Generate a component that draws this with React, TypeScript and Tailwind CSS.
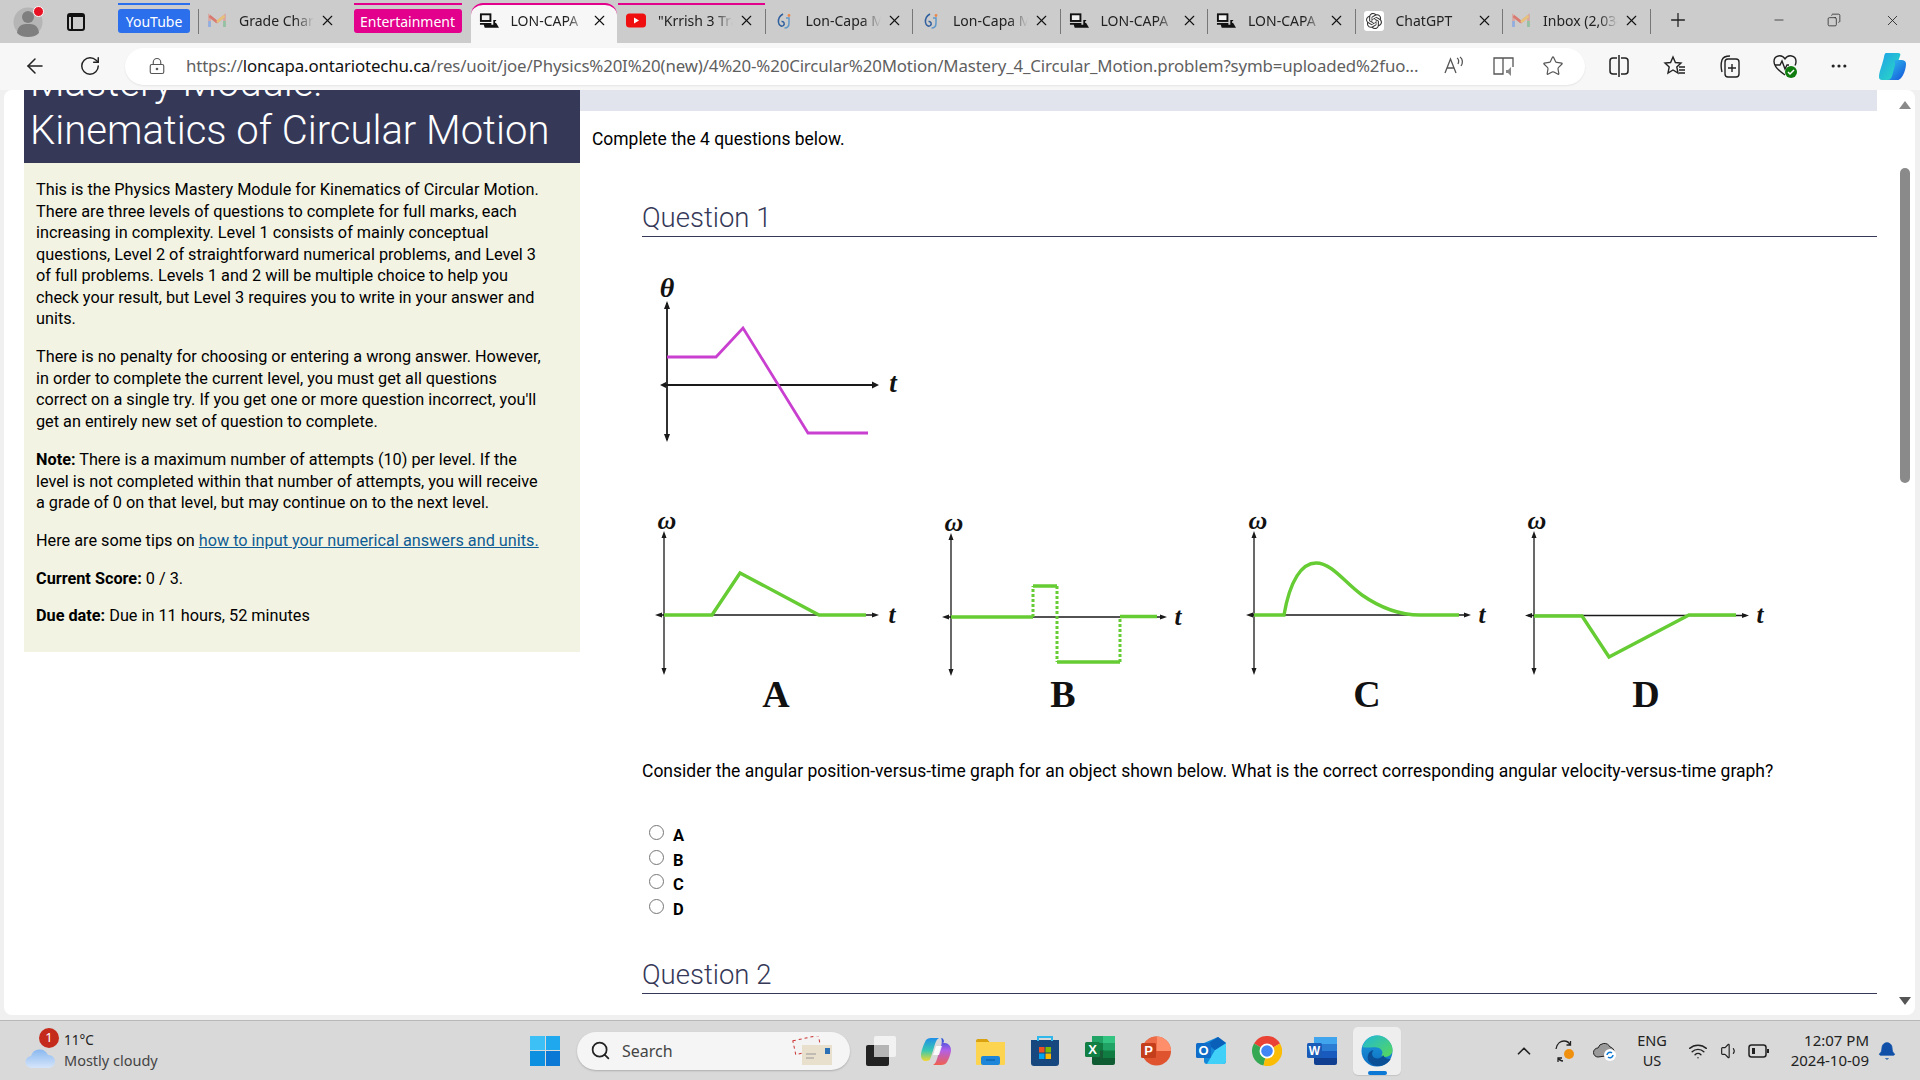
import React from "react";
import { ArrowLeft, RotateCw, LockKeyhole, Star, Search, Plus, Minus, X, Copy, Ellipsis, ChevronUp, Wifi, Volume1, Bell } from "lucide-react";
import { SiOpenai } from "react-icons/si";

const UI = { fontFamily: '"Noto Sans", sans-serif' };
const RB = { fontFamily: 'Roboto, sans-serif' };
const LS = { fontFamily: '"Liberation Sans", sans-serif' };

function Gmail() {
  return (
    <svg width="18" height="18" viewBox="0 0 18 18" fill="none">
      <path d="M1.5 15V4l7.5 6 7.5-6v11" stroke="#d9a59f" strokeWidth="2.6" fill="none" />
      <path d="M1.5 4l7.5 6" stroke="#d97a70" strokeWidth="2.6" />
      <path d="M16.5 4L9 10" stroke="#e6c27a" strokeWidth="2.6" />
      <path d="M16.5 9v6" stroke="#8fc4a4" strokeWidth="2.6" />
      <path d="M1.5 9v6" stroke="#8fb0e4" strokeWidth="2.6" />
    </svg>
  );
}
function Lon() {
  return (
    <svg width="21" height="17" viewBox="0 0 21 17">
      <path d="M1 1h12v9H1z" fill="#111" />
      <rect x="3" y="3" width="8" height="5" fill="#f2f2f2" />
      <path d="M1 11h12v2h2v-5h3v1h-1v2h1l3 5H6l-1-3H1z" fill="#111" />
    </svg>
  );
}
function Yt() {
  return (
    <svg width="20" height="15" viewBox="0 0 20 15">
      <rect width="20" height="14" y="0.5" rx="3.500" fill="#ef0f0f" />
      <path d="M8 4.500l5 3-5 3z" fill="#fff" />
    </svg>
  );
}
function Ont() {
  return (
    <svg width="18" height="18" viewBox="0 0 18 18" fill="none">
      <path d="M8 2C4.500 4 3 7 3.500 10.500c.5 3 3 4.500 5 3 1.500-1.500.5-4.500-2-4" stroke="#2f5f9e" strokeWidth="1.500" />
      <path d="M11 6h3v5c0 3.500-2 5-4.500 5" stroke="#5f96c8" strokeWidth="1.500" />
      <circle cx="14" cy="3.500" r="1.400" fill="#e8884a" />
    </svg>
  );
}
function Gpt() {
  return (
    <span className="w-[20px] h-[20px] bg-white rounded-[3px] flex items-center justify-center">
      <SiOpenai size={16} color="#333" />
    </span>
  );
}

function Tab({ icon, label, active, line }: { icon: React.ReactNode; label: string; active?: boolean; line?: boolean }) {
  return (
    <div className={"flex items-center h-[40px] w-[146.500px] shrink-0 pl-[8px] pb-[7px] " + (active ? "bg-[#f7f7f7] rounded-t-[12px] " : "") + (line ? "border-t-2 border-[#e3008c]" : "border-t-2 border-transparent")}>
      <span className="w-[20px] flex justify-center shrink-0">{icon}</span>
      <span className="ml-[12px] w-[78px] overflow-hidden whitespace-nowrap text-[14px] text-[#222] [mask-image:linear-gradient(to_right,black_72%,transparent_96%)]" style={UI}>{label}</span>
      <X size={17} strokeWidth={1.600} className="ml-[2px] text-[#111] shrink-0" />
    </div>
  );
}
const Sep = () => <div className="flex items-center h-[40px] shrink-0"><div className="w-px h-[25px] bg-[#777] -mt-[3px]" /></div>;

function TabBar() {
  return (
    <div className="h-[43px] bg-[#cccccc] flex items-end shrink-0">
      <div className="w-[118px] h-[43px] shrink-0 flex items-center relative">
        <svg width="32" height="30" viewBox="0 0 32 30" className="ml-[13px]">
          <circle cx="15" cy="15" r="14.500" fill="#b5b5b5" />
          <circle cx="15" cy="10" r="6" fill="#7f7f7f" />
          <path d="M4 26c1-8 5-9 11-9s10 1 11 9c-3 3-7 4-11 4S7 29 4 26z" fill="#7f7f7f" />
        </svg>
        <span className="absolute left-[33px] top-[6px] w-[11px] h-[11px] rounded-full bg-[#e81123] border border-white" />
        <span className="ml-[22px] w-[18px] h-[18px] rounded-[3px] border-2 border-[#111] border-t-[4px] flex">
          <span className="w-[4px] border-r-2 border-[#111]" />
        </span>
      </div>
      <div className="w-[72px] h-[40px] shrink-0 border-t-2 border-[#2b6fed] pt-[4px]">
        <div className="h-[24px] bg-[#2b6fed] rounded-[3px] flex items-center justify-center text-white text-[14px]" style={UI}>YouTube</div>
      </div>
      <div className="w-[8px] shrink-0" />
      <Sep />
      <Tab icon={<Gmail />} label="Grade Chart" />
      <div className="w-[8px] shrink-0" />
      <div className="w-[108px] h-[40px] shrink-0 border-t-2 border-[#e3008c] pt-[4px]">
        <div className="h-[24px] bg-[#e3008c] rounded-[3px] flex items-center justify-center text-white text-[14px]" style={UI}>Entertainment</div>
      </div>
      <div className="w-[9px] shrink-0" />
      <Tab icon={<Lon />} label="LON-CAPA" active line />
      <div className="w-px shrink-0" />
      <Tab icon={<Yt />} label={'"Krrish 3 Trailer'} line />
      <Sep />
      <Tab icon={<Ont />} label="Lon-Capa Mastery" />
      <Sep />
      <Tab icon={<Ont />} label="Lon-Capa Mastery" />
      <Sep />
      <Tab icon={<Lon />} label="LON-CAPA" />
      <Sep />
      <Tab icon={<Lon />} label="LON-CAPA" />
      <Sep />
      <Tab icon={<Gpt />} label="ChatGPT" />
      <Sep />
      <Tab icon={<Gmail />} label="Inbox (2,034)" />
      <Sep />
      <div className="h-[40px] flex items-center ml-[16px] pb-[6px]"><Plus size={22} strokeWidth={1.400} className="text-[#222]" /></div>
      <div className="h-[40px] flex items-center ml-[83px] pb-[6px]"><Minus size={14} strokeWidth={1.300} className="text-[#222]" /></div>
      <div className="h-[40px] flex items-center ml-[41px] pb-[6px]"><Copy size={14} strokeWidth={1.300} className="text-[#222] -scale-x-100" /></div>
      <div className="h-[40px] flex items-center ml-[43px] pb-[6px]"><X size={17} strokeWidth={1.200} className="text-[#222]" /></div>
    </div>
  );
}

function AddressBar() {
  return (
    <div className="h-[47px] bg-[#f7f7f7] flex items-center shrink-0 pb-[1px] text-[#222]">
      <ArrowLeft size={24} strokeWidth={1.500} className="ml-[23px]" />
      <RotateCw size={22} strokeWidth={1.600} className="ml-[32px]" />
      <div className="ml-[24px] w-[1460px] h-[37px] bg-white rounded-full flex items-center shadow-[0_1px_2px_rgba(0,0,0,0.08)]">
        <LockKeyhole size={18} strokeWidth={1.500} className="ml-[23px] text-[#555]" />
        <div className="ml-[20px] w-[1240px] whitespace-nowrap overflow-hidden text-[16.850px] text-[#5f5f5f] tracking-[-0.150px]" style={UI}>
          <span>https://</span><span className="text-[#111]">loncapa.ontariotechu.ca</span><span>/res/uoit/joe/Physics%20I%20(new)/4%20-%20Circular%20Motion/Mastery_4_Circular_Motion.problem?symb=uploaded%2fuo...</span>
        </div>
        <svg width="24" height="22" viewBox="0 0 24 22" className="ml-[16px] shrink-0" fill="none" stroke="#555" strokeWidth="1.300">
          <path d="M3 18L8.500 4 14 18M5 13h7" /><path d="M15 3c2 1 2 4 1 6M18 2c3 2 3 6 1 9" />
        </svg>
        <svg width="24" height="24" viewBox="0 0 24 24" className="ml-[26px] shrink-0" fill="none" stroke="#555" strokeWidth="1.300">
          <path d="M2 4h9v16H2zM11 4h10v9" /><path d="M14 16h2l3-3v9l-3-3h-2z" fill="#888" stroke="none" />
        </svg>
        <Star size={22} strokeWidth={1.300} className="ml-[26px] text-[#555] shrink-0" />
      </div>
      <svg width="22" height="24" viewBox="0 0 22 24" className="ml-[23px]" fill="none" stroke="#222" strokeWidth="1.500">
        <path d="M11 1v22M9 4H5a3 3 0 0 0-3 3v10a3 3 0 0 0 3 3h4M13 4h4a3 3 0 0 1 3 3v10a3 3 0 0 1-3 3h-4" />
      </svg>
      <svg width="24" height="24" viewBox="0 0 24 24" className="ml-[32px]" fill="none" stroke="#222" strokeWidth="1.400">
        <path d="M11 3l2.400 5.500 5.600.6-4.200 3.900 1.200 6-5-3-5 3 1.200-6L3 9.100l5.600-.6z" /><path d="M17 13h6M17 16h6M17 19h6" />
      </svg>
      <svg width="24" height="26" viewBox="0 0 24 26" className="ml-[32px]" fill="none" stroke="#222" strokeWidth="1.400">
        <rect x="7" y="6" width="14" height="18" rx="3" /><path d="M14 11v8M10 15h8M4 19c-1-4-1-9 0-12 1-3 3-4 8-4" />
      </svg>
      <svg width="26" height="26" viewBox="0 0 26 26" className="ml-[30px]" fill="none" stroke="#222" strokeWidth="1.400">
        <path d="M13 22C7 18 2 14 2 8.500 2 2 10 1 13 6c3-5 11-4 11 2.500 0 1.500-.4 3-1 4" /><path d="M3 12h5l2-4 3 8 2-4h2" />
        <circle cx="19" cy="19" r="6" fill="#107c10" stroke="none" /><path d="M16 19l2 2 4-4" stroke="#fff" strokeWidth="1.500" />
      </svg>
      <Ellipsis size={20} strokeWidth={1.800} className="ml-[31px]" />
      <svg width="30" height="32" viewBox="0 0 30 32" className="ml-[28px]">
        <defs>
          <linearGradient id="cp1" x1="0" y1="0" x2="1" y2="1"><stop offset="0" stopColor="#1fa0e8" /><stop offset="1" stopColor="#2ce0c0" /></linearGradient>
          <linearGradient id="cp2" x1="0" y1="0" x2="1" y2="1"><stop offset="0" stopColor="#30c8f0" /><stop offset="1" stopColor="#1450d8" /></linearGradient>
        </defs>
        <path d="M9 3h12c2 0 3 1 2 3l-7 20c-1 3-2 4-5 4H5c-2 0-3-1-3-3 0-5 3-11 5-20 .3-2 1-4 2-4z" fill="url(#cp1)" />
        <path d="M17 10h7c3 0 5 1 5 4 0 5-3 13-6 15-1 1-2 1-4 1H10c2 0 4-1 5-4l3-11c.4-2-.5-5-1-5z" fill="url(#cp2)" />
      </svg>
    </div>
  );
}

function Axes({ x, top, bottom, y, left, right }: { x: number; top: number; bottom: number; y: number; left: number; right: number }) {
  return (
    <g>
      <path d={`M${x} ${top}V${bottom}M${left} ${y}H${right}`} stroke="#1a1a1a" strokeWidth="1.300" fill="none" />
      <path d={`M${x} ${top - 3}l-2.500 7h5zM${x} ${bottom + 3}l-2.500 -7h5zM${left - 3} ${y}l7 -2.500v5zM${right + 3} ${y}l-7 -2.500v5z`} fill="#1a1a1a" />
    </g>
  );
}
const G = "#66cc33";
const S = { fontFamily: '"Liberation Serif", serif' };
function Letter({ x, y, c }: { x: number; y: number; c: string }) {
  return <text x={x} y={y} textAnchor="middle" fontSize="38" fontWeight="700" fill="#111" style={S}>{c}</text>;
}
function Ital({ x, y, c, size = 25 }: { x: number; y: number; c: string; size?: number }) {
  return <text x={x} y={y} textAnchor="middle" fontSize={size} fontWeight="700" fontStyle="italic" fill="#111" style={S}>{c}</text>;
}

function ThetaGraph() {
  return (
    <svg width="280" height="180" viewBox="640 270 280 180" className="block ml-[-2px]">
      <Ital x={667} y={297} c="θ" size={28} />
      <Ital x={893} y={392} c="t" size={27} />
      <path d="M667 303V440" stroke="#1a1a1a" strokeWidth="1.800" />
      <path d="M662 385H876" stroke="#1a1a1a" strokeWidth="1.800" />
      <path d="M667 301l-3 8h6zM667 442l-3 -8h6zM660 385l6 -3v6zM879 385l-7 -3.500v7z" fill="#1a1a1a" />
      <path d="M667 357H716L743 328 808 433H868" stroke="#c93fd0" strokeWidth="2.800" fill="none" />
    </svg>
  );
}

function OmegaGraphs() {
  return (
    <svg width="1140" height="210" viewBox="640 505 1140 210" className="block ml-[-2px]">
      <Ital x={667} y={529} c="ω" size={26} />
      <Ital x={892} y={623} c="t" />
      <Axes x={664} top={534} bottom={672} y={615} left={658} right={876} />
      <path d="M664 615H712L740 573 819 615H866" stroke={G} strokeWidth="3.400" fill="none" />
      <Letter x={776} y={707} c="A" />

      <Ital x={954} y={531} c="ω" size={26} />
      <Ital x={1178} y={625} c="t" />
      <Axes x={951} top={536} bottom={673} y={617} left={945} right={1164} />
      <path d="M951 617H1033M1033 586H1057M1057 662H1120M1120 616.500H1157" stroke={G} strokeWidth="3.400" fill="none" />
      <path d="M1033 617V586M1057 586V662M1120 662V617" stroke={G} strokeWidth="3" strokeDasharray="3 2" fill="none" />
      <Letter x={1063} y={707} c="B" />

      <Ital x={1258} y={529} c="ω" size={26} />
      <Ital x={1482} y={623} c="t" />
      <Axes x={1254} top={534} bottom={672} y={615} left={1249} right={1468} />
      <path d="M1254 615H1284C1290 580 1302 563 1316 563C1332 563 1345 583 1362 595C1382 609 1400 615 1420 615H1459" stroke={G} strokeWidth="3.400" fill="none" />
      <Letter x={1367} y={707} c="C" />

      <Ital x={1537} y={529} c="ω" size={26} />
      <Ital x={1760} y={623} c="t" />
      <Axes x={1534} top={534} bottom={672} y={615.500} left={1528} right={1746} />
      <path d="M1534 616H1582L1609 657 1689 615H1736" stroke={G} strokeWidth="3.400" fill="none" />
      <Letter x={1646} y={707} c="D" />
    </svg>
  );
}

function Sidebar() {
  return (
    <div className="w-[556px] shrink-0 text-black">
      <div className="h-[73px] bg-[#353857] flex flex-col justify-end overflow-hidden pl-[6px] pb-[8px] text-white text-[40px] leading-[48px] font-light whitespace-nowrap" style={RB}>
        <div className="shrink-0">Mastery Module:</div>
        <div className="shrink-0">Kinematics of Circular Motion</div>
      </div>
      <div className="h-[489px] bg-[#f3f3e3] pl-[12px] pt-[16px] w-full text-[16.250px] leading-[21.500px]" style={RB}>
        <div className="w-[510px]">
          <p>This is the Physics Mastery Module for Kinematics of Circular Motion. There are three levels of questions to complete for full marks, each increasing in complexity. Level 1 consists of mainly conceptual questions, Level 2 of straightforward numerical problems, and Level 3 of full problems. Levels 1 and 2 will be multiple choice to help you check your result, but Level 3 requires you to write in your answer and units.</p>
          <p className="mt-[16.500px]">There is no penalty for choosing or entering a wrong answer. However, in order to complete the current level, you must get all questions correct on a single try. If you get one or more question incorrect, you'll get an entirely new set of question to complete.</p>
          <p className="mt-[17px]"><b className="font-bold">Note:</b> There is a maximum number of attempts (10) per level. If the level is not completed within that number of attempts, you will receive a grade of 0 on that level, but may continue on to the next level.</p>
          <p className="mt-[16.500px]">Here are some tips on <span className="text-[#0f5d94] underline">how to input your numerical answers and units.</span></p>
          <p className="mt-[16px]"><b className="font-bold">Current Score:</b> 0 / 3.</p>
          <p className="mt-[15.500px]"><b className="font-bold">Due date:</b> Due in 11 hours, 52 minutes</p>
        </div>
      </div>
    </div>
  );
}

function Radio({ c }: { c: string }) {
  return (
    <div className="flex h-[24.600px] items-start">
      <span className="w-[15px] h-[15px] rounded-full border-[1.500px] border-[#767676] bg-white ml-[7px] shrink-0" />
      <span className="ml-[9px] font-bold text-[16.500px] leading-[24px] -mt-[1px]">{c}</span>
    </div>
  );
}

function Main() {
  return (
    <div className="w-[1297px] shrink-0 text-black" style={RB}>
      <div className="h-[21px] bg-[#e1e4ed]" />
      <div className="pl-[12px] text-[17.450px] leading-[24px] mt-[16px]">Complete the 4 questions below.</div>
      <div className="pl-[62px]">
        <h2 className="text-[27.500px] font-light leading-[36px] text-[#353857] mt-[49px]">Question 1</h2>
        <div className="h-px bg-[#353857]" />
        <div className="mt-[33px]"><ThetaGraph /></div>
        <div className="mt-[55px]"><OmegaGraphs /></div>
        <div className="text-[17.500px] leading-[24px] mt-[44px] whitespace-nowrap">Consider the angular position-versus-time graph for an object shown below. What is the correct corresponding angular velocity-versus-time graph?</div>
        <div className="mt-[42px]">
          <Radio c="A" /><Radio c="B" /><Radio c="C" /><Radio c="D" />
        </div>
        <h2 className="text-[27.500px] font-light leading-[36px] text-[#353857] mt-[34px]">Question 2</h2>
        <div className="h-px bg-[#353857]" />
      </div>
    </div>
  );
}

function Scrollbar() {
  return (
    <div className="flex-1 flex flex-col items-center pl-[18px]">
      <div className="w-full flex justify-center mt-[11px]"><span className="w-0 h-0 border-x-[6px] border-x-transparent border-b-[8px] border-b-[#8a8a8a]" /></div>
      <div className="w-[10px] h-[315px] bg-[#8a8a8a] rounded-[5px] mt-[59px]" />
      <div className="flex-1" />
      <div className="w-full flex justify-center mb-[10px]"><span className="w-0 h-0 border-x-[6px] border-x-transparent border-t-[8px] border-t-[#555]" /></div>
    </div>
  );
}

function Win() {
  return (
    <div className="grid grid-cols-2 gap-[1px] w-[30px] h-[30px] shrink-0">
      <span className="bg-[#3cc0f5]" /><span className="bg-[#1fa8ee]" /><span className="bg-[#0e90e0]" /><span className="bg-[#0a78d4]" />
    </div>
  );
}

function Taskbar() {
  return (
    <div className="h-[60px] bg-[#d9d9d9] border-t border-[#b8b8b8] flex items-center shrink-0 text-[#222]" style={UI}>
      <div className="w-[530px] shrink-0 flex items-center pl-[25px] relative h-full">
        <svg width="32" height="22" viewBox="0 0 32 22" className="mt-[14px]">
          <defs><linearGradient id="cl" x1="0" y1="0" x2="0" y2="1"><stop offset="0" stopColor="#8ab8f0" /><stop offset="1" stopColor="#d5e5fa" /></linearGradient></defs>
          <path d="M7 21a6 6 0 0 1-1-12 9 9 0 0 1 17-1 6.500 6.500 0 0 1 1 13z" fill="url(#cl)" />
        </svg>
        <span className="absolute left-[39px] top-[7px] w-[20px] h-[20px] rounded-full bg-[#c42b1c] text-white text-[13px] flex items-center justify-center">1</span>
        <div className="ml-[7px] leading-[20px] -mt-[2px]">
          <div className="text-[13.500px] text-[#222]">11°C</div>
          <div className="text-[14.500px] text-[#444]">Mostly cloudy</div>
        </div>
      </div>
      <Win />
      <div className="ml-[17px] w-[273px] h-[38px] bg-[#f5f5f5] rounded-full flex items-center shadow-[0_1px_2px_rgba(0,0,0,0.2)] shrink-0">
        <Search size={21} strokeWidth={2} className="ml-[13px] text-[#222]" />
        <span className="ml-[11px] text-[16px] text-[#444]">Search</span>
        <svg width="42" height="30" viewBox="0 0 42 30" className="ml-[119px]">
          <rect x="2" y="2" width="26" height="14" fill="#f3f3f3" stroke="#c33" strokeDasharray="3 3" transform="rotate(-12 15 9)" />
          <rect x="10" y="9" width="30" height="20" fill="#e8dfcd" />
          <path d="M14 18h10M14 22h8" stroke="#999" /><rect x="33" y="12" width="5" height="6" fill="#2b6fb5" />
        </svg>
      </div>
      <div className="ml-[16px] w-[30px] h-[30px] shrink-0 relative">
        <div className="absolute right-0 top-0 w-[22px] h-[21px] bg-[#f2f2f2] rounded-[2px]" />
        <div className="absolute left-0 bottom-0 w-[23px] h-[21px] bg-[#222] rounded-[2px]" />
        <div className="absolute left-[8px] top-[9px] w-[15px] h-[12px] bg-[#b5b5b5]" />
      </div>
      <svg width="30" height="30" viewBox="0 0 30 30" className="ml-[25px] shrink-0">
        <defs>
          <linearGradient id="tc1" x1="0" y1="0" x2="0" y2="1"><stop offset="0" stopColor="#1f8fe8" /><stop offset="0.55" stopColor="#3ac8b0" /><stop offset="1" stopColor="#f0d830" /></linearGradient>
          <linearGradient id="tc2" x1="0" y1="0" x2="0" y2="1"><stop offset="0" stopColor="#2050d8" /><stop offset="0.45" stopColor="#b060e8" /><stop offset="1" stopColor="#f06050" /></linearGradient>
        </defs>
        <path d="M10 2h8c-2 1-3 3-4 6l-4 13c-1 3-2 4-5 4-3 0-5-2-5-6 0-3 2-9 4-13 1-3 3-4 6-4z" fill="url(#tc1)" />
        <path d="M20 2c2 0 3 2 3 4l-1 1h2c3 0 6 3 6 7 0 3-2 9-4 12-1 2-3 3-6 3h-8c2-1 3-3 4-6l4-13c1-3 1-7 0-8z" fill="url(#tc2)" />
        <path d="M15 10h6l-3 9h-6z" fill="#fff" opacity="0.85" />
      </svg>
      <svg width="31" height="30" viewBox="0 0 31 30" className="ml-[24px] shrink-0">
        <path d="M1 5a2 2 0 0 1 2-2h9l3 3.500H1z" fill="#d9a20e" /><path d="M1 6h29v22a1 1 0 0 1-1 1H2a1 1 0 0 1-1-1z" fill="#fcd450" />
        <rect x="6" y="20" width="19" height="9" rx="2" fill="#1d86d8" /><path d="M11 24h9" stroke="#0d5fa8" strokeWidth="1.200" />
      </svg>
      <svg width="30" height="31" viewBox="0 0 30 31" className="ml-[24px] shrink-0">
        <path d="M1 5h28v23a3 3 0 0 1-3 3H4a3 3 0 0 1-3-3z" fill="#17477f" /><path d="M8 6V2h14v4" fill="none" stroke="#30b8ea" strokeWidth="2" />
        <rect x="9" y="12" width="5.500" height="5.500" fill="#f25022" /><rect x="15.500" y="12" width="5.500" height="5.500" fill="#7fba00" /><rect x="9" y="18.500" width="5.500" height="5.500" fill="#00a4ef" /><rect x="15.500" y="18.500" width="5.500" height="5.500" fill="#ffb900" />
      </svg>
      <svg width="30" height="29" viewBox="0 0 30 29" className="ml-[25px] shrink-0">
        <rect x="7" y="0" width="12" height="7.500" fill="#21a366" /><rect x="18" y="0" width="12" height="7.500" fill="#33c481" />
        <rect x="7" y="7" width="12" height="8" fill="#107c41" /><rect x="18" y="7" width="12" height="8" fill="#21a366" />
        <rect x="7" y="14.500" width="12" height="7.500" fill="#185c37" /><rect x="18" y="14.500" width="12" height="7.500" fill="#107c41" />
        <path d="M7 22h23v5a2 2 0 0 1-2 2H9a2 2 0 0 1-2-2z" fill="#0f5c32" />
        <rect x="0" y="6" width="15" height="15" rx="1.500" fill="#117e43" />
        <text x="7.500" y="18" textAnchor="middle" fontSize="13" fontWeight="700" fill="#fff" style={LS}>X</text>
      </svg>
      <svg width="30" height="30" viewBox="0 0 30 30" className="ml-[26px] shrink-0">
        <circle cx="15.500" cy="15" r="14.500" fill="#e0532f" />
        <path d="M15.500 .5A14.500 14.500 0 0 1 30 15H15.500z" fill="#ff8f6b" /><path d="M15.500 .5A14.500 14.500 0 0 0 3 8h12.500z" fill="#ed6c47" />
        <rect x="0" y="7" width="15" height="15" rx="1.500" fill="#c43e1c" />
        <text x="7.500" y="19" textAnchor="middle" fontSize="13" fontWeight="700" fill="#fff" style={LS}>P</text>
      </svg>
      <svg width="30" height="27" viewBox="0 0 30 27" className="ml-[25px] shrink-0">
        <path d="M8 6L22 0l8 6v18a3 3 0 0 1-3 3H11a3 3 0 0 1-3-3z" fill="#1488d8" />
        <path d="M30 6v18a3 3 0 0 1-3 3H11l8-14z" fill="#40d0f8" />
        <path d="M22 0l8 6-11 7-8-6z" fill="#0a60b8" />
        <rect x="0" y="6" width="15" height="15" rx="1.500" fill="#0f6cc8" />
        <text x="7.500" y="18" textAnchor="middle" fontSize="13" fontWeight="700" fill="#fff" style={LS}>O</text>
      </svg>
      <svg width="30" height="30" viewBox="0 0 30 30" className="ml-[26px] shrink-0">
        <path d="M15 15L28 7.500A15 15 0 0 0 2 7.500z" fill="#ea4335" /><path d="M15 15L2 7.500A15 15 0 0 0 11.500 29.600z" fill="#34a853" /><path d="M15 15L11.500 29.600A15 15 0 0 0 28 7.500z" fill="#fbbc05" />
        <circle cx="15" cy="15" r="7.500" fill="#fff" /><circle cx="15" cy="15" r="5.800" fill="#4285f4" />
      </svg>
      <svg width="30" height="28" viewBox="0 0 30 28" className="ml-[25px] shrink-0">
        <rect x="7" y="0" width="23" height="7.500" fill="#41a5ee" /><rect x="7" y="7" width="23" height="7.500" fill="#2b7cd3" /><rect x="7" y="14" width="23" height="7.500" fill="#185abd" />
        <path d="M7 21h23v5a2 2 0 0 1-2 2H9a2 2 0 0 1-2-2z" fill="#103f91" />
        <rect x="0" y="6" width="15" height="15" rx="1.500" fill="#1a5bb8" />
        <text x="7.500" y="18" textAnchor="middle" fontSize="12" fontWeight="700" fill="#fff" style={LS}>W</text>
      </svg>
      <div className="ml-[16px] w-[48px] h-[48px] bg-[#eeeeee] rounded-[5px] flex flex-col items-center shrink-0 shadow-[0_1px_1px_rgba(0,0,0,0.1)] relative">
        <svg width="32" height="32" viewBox="0 0 32 32" className="mt-[8px]">
          <defs>
            <linearGradient id="ed" x1="0" y1="0" x2="1" y2="1"><stop offset="0" stopColor="#1fb8d8" /><stop offset="1" stopColor="#58d858" /></linearGradient>
            <linearGradient id="ed2" x1="0" y1="0" x2="0" y2="1"><stop offset="0" stopColor="#1f9ee0" /><stop offset="1" stopColor="#0c6cc0" /></linearGradient>
          </defs>
          <circle cx="16" cy="16" r="15.500" fill="url(#ed2)" />
          <path d="M1.500 12C3.500 5 9 .5 16 .5 25 .5 31.500 8 31.500 15c0 4-3 7-8 7-3 0-3.500-1-2.500-2.500 1-2 .5-6-5-7-6-1-10 1-14.500-.5z" fill="url(#ed)" />
          <path d="M22 20c-1 3-5 4-8 3-3-1-4-5-1.500-8-5 1-7 6-5 11 2.500 4 8 6 13.500 4.500 4-1 7-3.500 9-7-2 1-5 1-8-3.500z" fill="#0b4f96" />
        </svg>
        <span className="absolute bottom-[0px] w-[19px] h-[4px] rounded-full bg-[#0a78d4]" />
      </div>
      <ChevronUp size={22} strokeWidth={1.800} className="ml-[112px] shrink-0" />
      <svg width="22" height="24" viewBox="0 0 22 24" className="ml-[18px] shrink-0" fill="none" stroke="#222" strokeWidth="1.300">
        <path d="M3 10C4 4 8 2 11 2c3 0 5 1 6 4M17.500 2v4h-4M8 21l-3-1M5 23v-4h4M5 19c1 2 3 3 5 3" />
        <circle cx="16" cy="15" r="5" fill="#f0900f" stroke="none" />
      </svg>
      <svg width="24" height="22" viewBox="0 0 24 22" className="ml-[18px] shrink-0" fill="none">
        <path d="M5 17a4.500 4.500 0 0 1 0-9 6.500 6.500 0 0 1 12-1 5 5 0 0 1 3 8z" fill="#9a9a9a" stroke="#222" />
        <circle cx="17" cy="15" r="6" fill="#fff" /><path d="M14 15a3 3 0 0 1 5-2M20 15a3 3 0 0 1-5 2" stroke="#0a78d4" strokeWidth="1.500" />
      </svg>
      <div className="ml-[10px] w-[50px] text-center text-[14.500px] leading-[20px] shrink-0 -mt-[2px]">ENG<br />US</div>
      <Wifi size={20} strokeWidth={1.700} className="ml-[11px] shrink-0" />
      <Volume1 size={20} strokeWidth={1.400} className="ml-[12px] shrink-0" />
      <svg width="22" height="16" viewBox="0 0 22 16" className="ml-[8px] shrink-0" fill="none" stroke="#222" strokeWidth="1.500">
        <rect x="1" y="2" width="17" height="12" rx="2.500" /><rect x="4" y="5" width="3" height="6" fill="#222" stroke="none" /><path d="M20 6v4" strokeWidth="2" />
      </svg>
      <div className="ml-[13px] w-[86px] text-right text-[15px] leading-[20px] shrink-0 whitespace-nowrap -mt-[2px]">12:07 PM<br />2024-10-09</div>
      <Bell size={20} fill="#0f4fa8" strokeWidth={1} className="ml-[8px] text-[#0f4fa8] shrink-0" />
    </div>
  );
}

export default function App() {
  return (
    <div className="w-[1920px] h-[1080px] overflow-hidden flex flex-col bg-[#f0f0f0]">
      <TabBar />
      <AddressBar />
      <div className="h-[925px] shrink-0 overflow-hidden pl-[4px] pr-[5px]">
        <div className="h-full bg-white rounded-t-[8px] flex overflow-hidden rounded-b-[8px]">
          <div className="w-[20px] shrink-0" />
          <Sidebar />
          <Main />
          <Scrollbar />
        </div>
      </div>
      <div className="h-[5px] shrink-0" />
      <Taskbar />
    </div>
  );
}
